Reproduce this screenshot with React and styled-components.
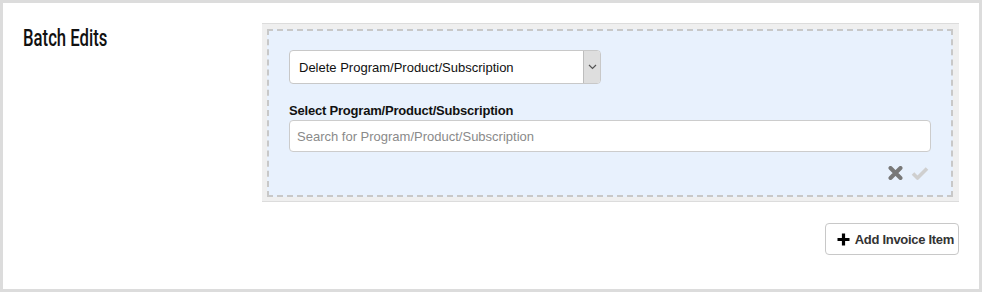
import React from 'react';
import styled, { createGlobalStyle } from 'styled-components';

const GlobalStyle = createGlobalStyle`
  html, body, #root {
    margin: 0;
    padding: 0;
    height: 100%;
  }
  * {
    box-sizing: border-box;
  }
  body {
    font-family: "Liberation Sans", Arial, sans-serif;
    background: #fff;
  }
`;

const Page = styled.div`
  height: 100%;
  border: 3px solid #dcdcdc;
  padding: 20px 20px 0 20px;
  display: flex;
  flex-direction: column;
`;

const Row = styled.div`
  display: flex;
  align-items: flex-start;
`;

const HeadingCol = styled.div`
  width: 239px;
`;

const Heading = styled.h2`
  display: inline-block;
  margin: 4px 0 0;
  font-family: Roboto, "Liberation Sans", sans-serif;
  font-weight: 500;
  font-size: 22px;
  line-height: 1;
  color: #111;
  transform: scale(0.76, 1.05);
  transform-origin: top left;
`;

const Panel = styled.div`
  width: 697px;
  background: #efefef;
  border-top: 1px solid #dcdcdc;
  border-bottom: 1px solid #dcdcdc;
  padding: 5px 6px 4px 5px;
`;

const DashedBox = styled.div`
  background: #e8f1fd;
  border: 2px dashed #c8c8c8;
  padding: 19px 20px 14px 20px;
`;

const SelectWrap = styled.div`
  width: 312px;
  height: 34px;
  display: flex;
  border: 1px solid #c8c8c8;
  border-radius: 4px;
  background: #fff;
  overflow: hidden;
  font-size: 13px;
  color: #111;
`;

const SelectText = styled.div`
  flex: 1;
  display: flex;
  align-items: center;
  padding-left: 9px;
`;

const SelectArrow = styled.div`
  width: 17px;
  background: #dedede;
  border-left: 1px solid #bdbdbd;
  display: flex;
  align-items: center;
  justify-content: center;
`;

const Label = styled.div`
  margin-top: 19px;
  font-size: 13px;
  line-height: 15px;
  font-weight: bold;
  color: #111;
  letter-spacing: -0.2px;
`;

const SearchInput = styled.input`
  display: block;
  width: 100%;
  height: 32px;
  margin-top: 2px;
  border: 1px solid #cccccc;
  border-radius: 4px;
  background: #fff;
  padding: 0 7px;
  font-family: "Liberation Sans", Arial, sans-serif;
  font-size: 13px;
  outline: none;
  &::placeholder {
    color: #8a8a8a;
  }
`;

const Actions = styled.div`
  display: flex;
  justify-content: flex-end;
  align-items: center;
  gap: 8px;
  margin-top: 13px;
  padding-right: 2px;
  height: 16px;
`;

const IconButton = styled.span`
  display: inline-flex;
  color: ${p => p.$color};
`;

const Footer = styled.div`
  display: flex;
  justify-content: flex-end;
  width: 936px;
  margin-top: 21px;
`;

const AddButton = styled.button`
  display: flex;
  align-items: center;
  gap: 5px;
  height: 32px;
  padding: 0 4px 0 11px;
  background: #fff;
  border: 1px solid #c8c8c8;
  border-radius: 4px;
  font-family: "Liberation Sans", Arial, sans-serif;
  font-size: 13px;
  font-weight: bold;
  color: #333;
  letter-spacing: -0.3px;
`;

const Chevron = () => (
  <svg width="9" height="6" viewBox="0 0 9 6">
    <path d="M1 1 L4.5 4.5 L8 1" fill="none" stroke="#555" strokeWidth="1.2" />
  </svg>
);

const Cross = () => (
  <svg width="15" height="14" viewBox="0 0 15 14">
    <path d="M2.5 2 L12.5 12 M12.5 2 L2.5 12" stroke="currentColor" strokeWidth="4" strokeLinecap="round" />
  </svg>
);

const Check = () => (
  <svg width="18" height="14" viewBox="0 0 18 14">
    <path d="M2 7.5 L6.5 12 L16 2.5" fill="none" stroke="currentColor" strokeWidth="3.6" strokeLinejoin="round" />
  </svg>
);

const Plus = () => (
  <svg width="13" height="13" viewBox="0 0 13 13">
    <path d="M6.5 0.5 V12.5 M0.5 6.5 H12.5" stroke="#000" strokeWidth="3.2" />
  </svg>
);

function App() {
  return (
    <>
      <GlobalStyle />
      <Page>
        <Row>
          <HeadingCol>
            <Heading>Batch Edits</Heading>
          </HeadingCol>
          <Panel>
            <DashedBox>
              <SelectWrap>
                <SelectText>Delete Program/Product/Subscription</SelectText>
                <SelectArrow>
                  <Chevron />
                </SelectArrow>
              </SelectWrap>
              <Label>Select Program/Product/Subscription</Label>
              <SearchInput placeholder="Search for Program/Product/Subscription" />
              <Actions>
                <IconButton $color="#787878">
                  <Cross />
                </IconButton>
                <IconButton $color="#cfcfcf">
                  <Check />
                </IconButton>
              </Actions>
            </DashedBox>
          </Panel>
        </Row>
        <Footer>
          <AddButton>
            <Plus />
            Add Invoice Item
          </AddButton>
        </Footer>
      </Page>
    </>
  );
}

export default App;
